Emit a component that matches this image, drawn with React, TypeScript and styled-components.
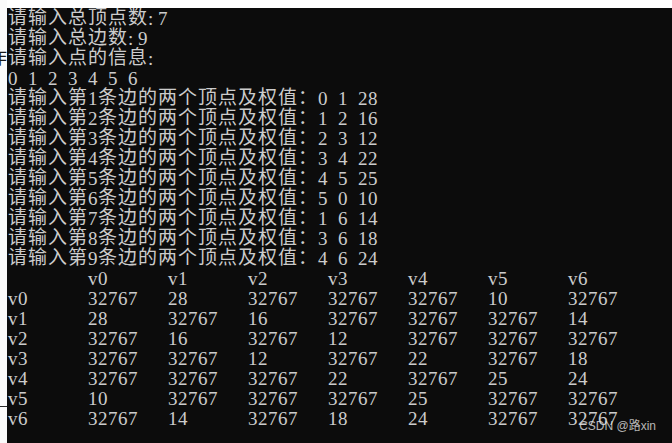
import styled, { createGlobalStyle } from "styled-components";

const GlobalStyle = createGlobalStyle`
  html, body {
    margin: 0;
    padding: 0;
    background: #ffffff;
  }
  body {
    width: 672px;
    height: 443px;
    overflow: hidden;
  }
`;

const Page = styled.div`
  display: flex;
  width: 672px;
  height: 443px;
  background: #ffffff;
`;

// sliver of the window lying behind the console
const BehindStrip = styled.div`
  width: 7px;
  flex-shrink: 0;
  display: flex;
  flex-direction: column;
  overflow: hidden;
  background: #fafafa;
`;

const BehindText = styled.div`
  display: flex;
  justify-content: flex-end;
  margin-top: 46px;
  height: 20px;
  font: 18px/20px "Noto Sans CJK SC", sans-serif;
  color: #1a1a1a;
  white-space: nowrap;
`;

const BehindRule = styled.div`
  margin-top: 340px;
  height: 1px;
  background: #2a2a2a;
`;

const Frame = styled.div`
  flex: 1;
  display: flex;
  padding-top: 8px;
`;

const Console = styled.div`
  position: relative;
  flex: 1;
  padding-left: 1px;
  background: #0c0c0c;
  color: #cccccc;
  overflow: hidden;
`;

const Line = styled.div`
  display: flex;
  height: 20px;
`;

const Cell = styled.span<{ $wide: boolean }>`
  flex: none;
  width: ${(p) => (p.$wide ? 20 : 10)}px;
  font-family: "Liberation Serif", "Noto Sans CJK SC", serif;
  font-size: ${(p) => (p.$wide ? 19 : 19)}px;
  line-height: ${(p) => (p.$wide ? 19 : 21)}px;
  white-space: pre;
`;

const Matrix = styled.div`
  display: grid;
  grid-template-columns: repeat(8, 80px);
  grid-auto-rows: 20px;
`;

const MatrixCell = styled.div`
  display: flex;
`;

const Watermark = styled.div`
  position: absolute;
  right: 16px;
  bottom: 10px;
  font: 12px "Liberation Sans", "Noto Sans CJK SC", sans-serif;
  color: rgba(225, 225, 225, 0.8);
  white-space: nowrap;
`;

const isWide = (ch: string) => {
  const c = ch.codePointAt(0) || 0;
  return c >= 0x2e80;
};

const Mono = ({ text }: { text: string }) => (
  <>
    {Array.from(text).map((ch, i) => (
      <Cell key={i} $wide={isWide(ch)}>
        {ch}
      </Cell>
    ))}
  </>
);

const edges: [number, number, number][] = [
  [0, 1, 28],
  [1, 2, 16],
  [2, 3, 12],
  [3, 4, 22],
  [4, 5, 25],
  [5, 0, 10],
  [1, 6, 14],
  [3, 6, 18],
  [4, 6, 24],
];

const N = 7;
const INF = 32767;

const buildMatrix = () => {
  const m: number[][] = Array.from({ length: N }, () => Array(N).fill(INF));
  edges.forEach(([a, b, w]) => {
    m[a][b] = w;
    m[b][a] = w;
  });
  return m;
};

const App = () => {
  const matrix = buildMatrix();
  const lines = [
    "请输入总顶点数:7",
    "请输入总边数:9",
    "请输入点的信息:",
    "0 1 2 3 4 5 6",
    ...edges.map(
      ([a, b, w], i) => `请输入第${i + 1}条边的两个顶点及权值：${a} ${b} ${w}`
    ),
  ];

  return (
    <>
      <GlobalStyle />
      <Page>
        <BehindStrip>
          <BehindText>作</BehindText>
          <BehindRule />
        </BehindStrip>
        <Frame>
          <Console>
            {lines.map((l, i) => (
              <Line key={i}>
                <Mono text={l} />
              </Line>
            ))}
            <Matrix>
              <MatrixCell />
              {matrix.map((_, j) => (
                <MatrixCell key={j}>
                  <Mono text={`v${j}`} />
                </MatrixCell>
              ))}
              {matrix.map((row, i) => [
                <MatrixCell key={`l${i}`}>
                  <Mono text={`v${i}`} />
                </MatrixCell>,
                ...row.map((v, j) => (
                  <MatrixCell key={`${i}-${j}`}>
                    <Mono text={String(v)} />
                  </MatrixCell>
                )),
              ])}
            </Matrix>
            <Watermark>CSDN @路xin</Watermark>
          </Console>
        </Frame>
      </Page>
    </>
  );
};

export default App;
